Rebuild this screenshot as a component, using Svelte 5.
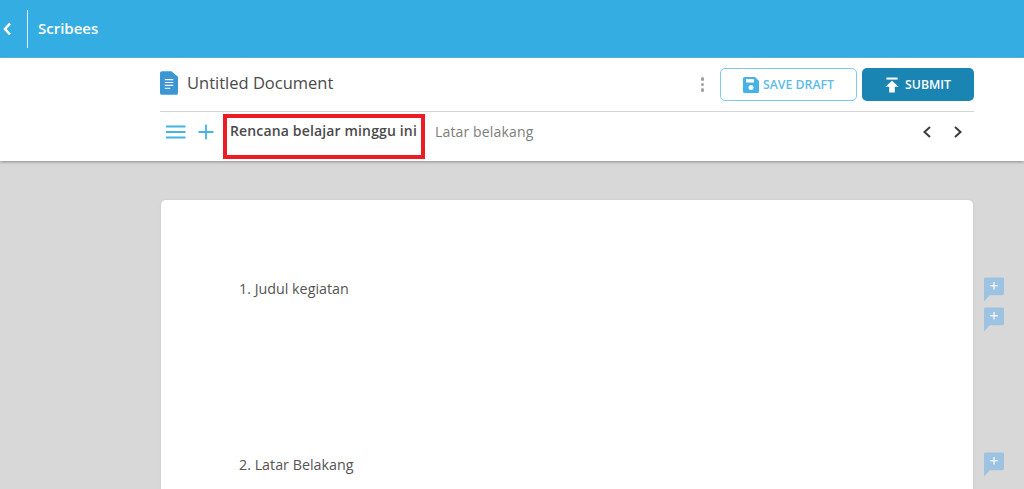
<script>
	const comments = [
		{ id: 1, gap: 0 },
		{ id: 2, gap: 5 },
		{ id: 3, gap: 120 }
	];
</script>

<div class="page">
	<header class="topbar">
		<button class="back" aria-label="Back">
			<svg width="10" height="14" viewBox="0 0 10 14"><path d="M8 1.5 L3 7 L8 12.5" fill="none" stroke="#fff" stroke-width="2.6" /></svg>
		</button>
		<span class="brand">Scribees</span>
	</header>

	<section class="toolbar">
		<div class="inner">
			<div class="doc-row">
				<svg class="doc-icon" width="18" height="24" viewBox="0 0 19 25">
					<path d="M2 0 H12 L19 6 V23 a2 2 0 0 1 -2 2 H2 a2 2 0 0 1 -2 -2 V2 a2 2 0 0 1 2 -2 Z" fill="#3a97d3" />
					<path d="M5 9 H14 M5 12 H14 M5 15 H14 M5 18 H11" stroke="#fff" stroke-width="1.2" />
				</svg>
				<h1>Untitled Document</h1>
				<div class="dots"><i></i><i></i><i></i></div>
				<button class="btn save">
					<svg width="16" height="16" viewBox="0 0 16 16">
						<path d="M1.5 0 H12 L16 4 V14.5 a1.5 1.5 0 0 1 -1.5 1.5 H1.5 A1.5 1.5 0 0 1 0 14.5 V1.5 A1.5 1.5 0 0 1 1.5 0 Z" fill="#45b3e7" />
						<rect x="3" y="2" width="8" height="3.5" fill="#fff" />
						<circle cx="8" cy="10.5" r="2.5" fill="#fff" />
					</svg>
					SAVE DRAFT
				</button>
				<button class="btn submit">
					<svg width="14" height="16" viewBox="0 0 15 16">
						<rect x="1.5" y="0" width="12" height="2.2" fill="#fff" />
						<path d="M7.5 3.5 L14.5 10 H10.5 V16 H4.5 V10 H0.5 Z" fill="#fff" />
					</svg>
					SUBMIT
				</button>
			</div>
			<div class="tab-row">
				<button class="icon-btn menu" aria-label="Menu">
					<svg width="20" height="14" viewBox="0 0 20 14"><path d="M0 1.5 H19.5 M0 7 H19.5 M0 12.5 H19.5" stroke="#45b3e7" stroke-width="2" /></svg>
				</button>
				<button class="icon-btn plus" aria-label="Add">
					<svg width="16" height="16" viewBox="0 0 16 16"><path d="M8 0.5 V15.5 M0.5 8 H15.5" stroke="#45b3e7" stroke-width="1.8" /></svg>
				</button>
				<div class="tab active">Rencana belajar minggu ini</div>
				<div class="tab">Latar belakang</div>
				<div class="arrows">
					<svg width="10" height="12" viewBox="0 0 10 12"><path d="M8 1 L2.5 6 L8 11" fill="none" stroke="#3c3c3c" stroke-width="2" /></svg>
					<svg width="10" height="12" viewBox="0 0 10 12"><path d="M2 1 L7.5 6 L2 11" fill="none" stroke="#3c3c3c" stroke-width="2" /></svg>
				</div>
			</div>
		</div>
	</section>

	<main class="canvas">
		<article class="sheet">
			<p class="first">1. Judul kegiatan</p>
			<p class="second">2. Latar Belakang</p>
		</article>
		<aside class="comments">
			{#each comments as c (c.id)}
				<svg style="margin-top: {c.gap}px" width="20" height="25" viewBox="0 0 21 25">
					<path d="M1.5 0 H19.5 A1.5 1.5 0 0 1 21 1.5 V17 A1.5 1.5 0 0 1 19.5 18.5 H6 L0 25 V1.5 A1.5 1.5 0 0 1 1.5 0 Z" fill="#9dc3e2" />
					<path d="M10.5 4.5 V12.5 M6.5 8.5 H14.5" stroke="#f0f4f8" stroke-width="1.5" />
				</svg>
			{/each}
		</aside>
	</main>
</div>

<style>
	:global(body) {
		margin: 0;
		overflow: hidden;
	}

	.page {
		height: 489px;
		overflow: hidden;
		background: #d8d8d8;
		font-family: 'Open Sans', sans-serif;
		color: #4a4a4a;
	}

	button {
		font-family: inherit;
		padding: 0;
		border: none;
		background: none;
	}

	.topbar {
		height: 58px;
		display: flex;
		align-items: center;
		background: #34ade3;
		border-bottom: 1px solid #5cbde9;
		box-sizing: border-box;
	}

	.back {
		width: 28px;
		height: 38px;
		display: flex;
		align-items: center;
		padding-left: 2px;
		box-sizing: border-box;
		border-right: 1px solid #e4f4fb;
	}

	.brand {
		margin-left: 10px;
		margin-bottom: 2px;
		font-size: 15px;
		font-weight: 600;
		color: #fff;
	}

	.toolbar {
		height: 103px;
		background: #fff;
		box-shadow: 0 1px 3px rgba(0, 0, 0, 0.35);
		position: relative;
	}

	.inner {
		width: 814px;
		margin-left: 160px;
	}

	.doc-row {
		height: 53px;
		display: flex;
		align-items: center;
		border-bottom: 1px solid #d4d4d4;
	}

	.doc-icon {
		margin-bottom: 4px;
	}

	h1 {
		margin: 0 0 0 9px;
		font-size: 16.5px;
		font-weight: 400;
		color: #4a4a4a;
		flex: 1;
		position: relative;
		top: -2px;
	}

	.dots {
		display: flex;
		flex-direction: column;
		gap: 2px;
		margin-right: 16px;
	}

	.dots i {
		width: 3.5px;
		height: 3.5px;
		border-radius: 50%;
		background: #a0a0a0;
	}

	.btn {
		height: 33px;
		display: flex;
		align-items: center;
		justify-content: center;
		box-sizing: border-box;
		border-radius: 5px;
		font-size: 12.3px;
		font-weight: 600;
	}

	.save {
		width: 137px;
		gap: 4px;
		margin-right: 5px;
		border: 1px solid #7ccbee;
		color: #5bbce9;
	}

	.submit {
		width: 112px;
		gap: 6px;
		background: #1a84b3;
		color: #fff;
	}

	.tab-row {
		height: 40px;
		display: flex;
		align-items: center;
		position: relative;
	}

	.icon-btn {
		display: flex;
	}

	.menu {
		margin-left: 6px;
	}

	.plus {
		margin-left: 12px;
	}

	.tab {
		font-size: 14px;
		letter-spacing: 0.15px;
		color: #7d7d7d;
		position: relative;
		top: -1px;
		white-space: nowrap;
	}

	/* red highlight sits over the tab, text is pinned near its top */
	.tab.active {
		margin-left: 9px;
		margin-right: 5px;
		padding: 3px 0 0 3px;
		box-sizing: border-box;
		width: 202px;
		height: 45px;
		border: 4px solid #ed1c24;
		font-weight: 600;
		color: #4a4a4a;
		top: 4px;
	}

	.tab:not(.active) {
		margin-left: 5px;
	}

	.arrows {
		margin-left: auto;
		margin-right: 11px;
		display: flex;
		gap: 21px;
	}

	.canvas {
		position: relative;
		padding: 39px 0 0 161px;
	}

	.sheet {
		width: 812px;
		height: 400px;
		background: #fff;
		border-radius: 5px;
		box-sizing: border-box;
		padding-left: 78px;
		box-shadow: 0 0 3px rgba(0, 0, 0, 0.08);
		font-size: 14.3px;
		color: #555;
	}

	.sheet p {
		margin: 0;
	}

	.first {
		padding-top: 79px;
	}

	.second {
		padding-top: 157px;
	}

	.comments {
		position: absolute;
		left: 984px;
		top: 116px;
		display: flex;
		flex-direction: column;
		align-items: flex-start;
	}
</style>
